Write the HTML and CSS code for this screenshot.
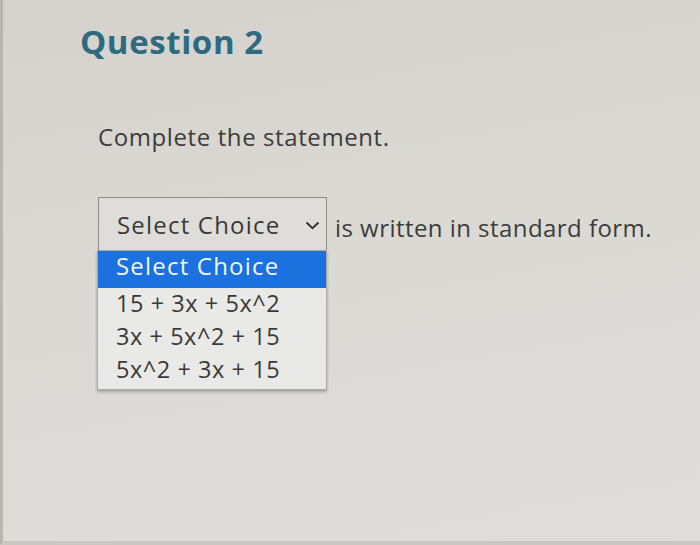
FILE: index.html
```html
<!DOCTYPE html>
<html>
<head>
<meta charset="utf-8">
<link rel="stylesheet" href="styles.css">
</head>
<body>
<div class="screen">
  <h1 class="title">Question 2</h1>
  <p class="prompt">Complete the statement.</p>
  <div class="line">
    <div class="picker">
      <div class="select">
        <span class="select-text">Select Choice</span>
        <svg class="chev" width="15" height="9" viewBox="0 0 15 9"><path d="M1.5 1.5 L7.5 7.2 L13.5 1.5" fill="none" stroke="#333" stroke-width="2"/></svg>
      </div>
      <ul class="options">
        <li class="opt active">Select Choice</li>
        <li class="opt">15 + 3x + 5x^2</li>
        <li class="opt">3x + 5x^2 + 15</li>
        <li class="opt">5x^2 + 3x + 15</li>
      </ul>
    </div>
    <span class="rest">is written in standard form.</span>
  </div>
</div>
</body>
</html>
```
FILE: styles.css
```css
html, body {
  margin: 0;
  padding: 0;
}
body {
  width: 700px;
  height: 545px;
  overflow: hidden;
  font-family: "Open Sans", sans-serif;
}
.screen {
  width: 700px;
  height: 545px;
  box-sizing: border-box;
  background: linear-gradient(170deg, #d5d2cc 0%, #dbd9d4 45%, #dedddA 100%);
  border-left: 3px solid #b9b6b0;
  border-bottom: 4px solid #c9c8c3;
  padding: 21px 0 0 77px;
}
.title {
  margin: 0;
  font-weight: 700;
  font-size: 33px;
  line-height: 42px;
  color: #2f6b80;
  letter-spacing: 0.6px;
}
.prompt {
  margin: 59px 0 0 18px;
  font-size: 24px;
  line-height: 30px;
  color: #3d3c3a;
  letter-spacing: 0.6px;
}
.line {
  display: flex;
  align-items: flex-start;
  margin: 45px 0 0 18px;
}
.picker {
  position: relative;
  width: 229px;
}
.select {
  height: 53px;
  box-sizing: border-box;
  border: 1px solid #8d8c88;
  border-bottom: none;
  display: flex;
  align-items: center;
  padding: 0 6px 0 18px;
  background: #deddd9;
}
.select-text {
  flex: 1;
  font-size: 24px;
  color: #3a3937;
  letter-spacing: 1.2px;
  white-space: nowrap;
}
.chev {
  margin-right: 0px;
  margin-top: 3px;
}
.options {
  position: absolute;
  left: -1px;
  top: 53px;
  width: 228px;
  margin: 0;
  padding: 0 0 2px 0;
  list-style: none;
  background: #e9e9e7;
  border: 1px solid #a9a8a4;
  box-shadow: 0 2px 3px rgba(0,0,0,0.25);
}
.opt {
  height: 33px;
  line-height: 31px;
  padding-left: 18px;
  font-size: 23.5px;
  color: #3a3937;
  letter-spacing: 0.55px;
  white-space: nowrap;
}
.opt.active {
  height: 37px;
  line-height: 30px;
  background: #1b72de;
  color: #f2f6fc;
  letter-spacing: 1.2px;
  font-size: 24px;
}
.rest {
  margin-left: 8px;
  margin-top: 16px;
  font-size: 24px;
  line-height: 30px;
  color: #3d3c3a;
  letter-spacing: 0.45px;
}
```
